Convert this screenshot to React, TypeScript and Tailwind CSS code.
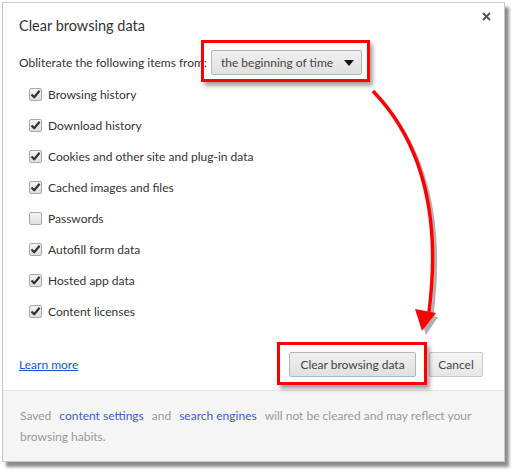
import React from 'react';

const items: { label: string; checked: boolean }[] = [
  { label: 'Browsing history', checked: true },
  { label: 'Download history', checked: true },
  { label: 'Cookies and other site and plug-in data', checked: true },
  { label: 'Cached images and files', checked: true },
  { label: 'Passwords', checked: false },
  { label: 'Autofill form data', checked: true },
  { label: 'Hosted app data', checked: true },
  { label: 'Content licenses', checked: true },
];

const Checkbox: React.FC<{ checked: boolean }> = ({ checked }) => (
  <div className="w-[13px] h-[13px] rounded-[2px] border border-[#a9a9a9] bg-gradient-to-b from-[#f4f4f4] to-[#dedede] flex items-center justify-center">
    {checked && (
      <svg width="11" height="11" viewBox="0 0 11 11">
        <path d="M1.5 5.5 L4.2 8.3 L9.6 1.8" fill="none" stroke="#333" strokeWidth="2.2" strokeLinejoin="round" />
      </svg>
    )}
  </div>
);

export default function App() {
  return (
    <div className="relative w-[514px] h-[472px] bg-white overflow-hidden font-['Lato',sans-serif] text-[#333]">
      {/* dialog */}
      <div className="ml-[2px] mt-[2px] w-[503px] h-[460px] bg-white border border-[#c8c8c8] shadow-[4px_5px_3px_rgba(0,0,0,0.45)] flex flex-col">
        <div className="relative px-[16px] pt-[12px]">
          <div className="text-[14.5px] leading-[22px] text-[#333]">Clear browsing data</div>
          <svg className="absolute right-[13px] top-[9px]" width="9" height="9" viewBox="0 0 9 9">
            <path d="M1 1 L8 8 M8 1 L1 8" stroke="#555" strokeWidth="2" />
          </svg>

          <div className="mt-[13px] flex items-center text-[12px]">
            <span className="whitespace-nowrap">Obliterate the following items from:</span>
            <div className="ml-[4px] w-[151px] h-[25px] rounded-[2px] border border-[#b5b5b5] bg-gradient-to-b from-[#f0f0f0] to-[#e0e0e0] flex items-center justify-between pl-[9px] pr-[7px] text-[#444]">
              <span className="whitespace-nowrap">the beginning of time</span>
              <svg width="10" height="6" viewBox="0 0 10 6">
                <path d="M0 0 H10 L5 6 Z" fill="#111" />
              </svg>
            </div>
          </div>

          <div className="mt-[4px] flex flex-col pl-[10px]">
            {items.map((it) => (
              <div key={it.label} className="h-[31px] flex items-center gap-[6px] text-[12px]">
                <Checkbox checked={it.checked} />
                <span>{it.label}</span>
              </div>
            ))}
          </div>
        </div>

        <div className="mt-auto px-[16px] h-[53px] flex items-start pt-[15px] justify-between">
          <a className="mt-[4px] text-[12px] text-[#1155cc] underline">Learn more</a>
          <div className="flex gap-[13px] mr-[5px]">
            <button className="w-[127px] h-[25px] rounded-[2px] border border-[#b5b5b5] bg-gradient-to-b from-[#f0f0f0] to-[#e0e0e0] text-[12px] text-[#444] whitespace-nowrap">
              Clear browsing data
            </button>
            <button className="w-[54px] h-[25px] rounded-[2px] border border-[#c8c8c8] bg-gradient-to-b from-[#f5f5f5] to-[#e6e6e6] text-[12px] text-[#444]">
              Cancel
            </button>
          </div>
        </div>

        <div className="h-[71px] bg-[#f5f5f5] border-t border-[#e2e2e2] px-[17px] pt-[14px] text-[12px] leading-[21px] text-[#999]">
          <div className="flex whitespace-nowrap">
            <span>Saved</span>
            <span className="ml-[8px] text-[#3b5bd0]">content settings</span>
            <span className="ml-[8px]">and</span>
            <span className="ml-[8px] text-[#3b5bd0]">search engines</span>
            <span className="ml-[8px]">will not be cleared and may reflect your</span>
          </div>
          <div>browsing habits.</div>
        </div>
      </div>

      {/* annotations */}
      <div className="absolute left-[201px] top-[40px] w-[169px] h-[42px] border-[3px] border-[#ff0000] shadow-[3px_4px_4px_rgba(0,0,0,0.35)]" />
      <div className="absolute left-[277px] top-[342px] w-[150px] h-[43px] border-[3px] border-[#ff0000] shadow-[3px_4px_4px_rgba(0,0,0,0.35)]" />
      <svg className="absolute left-0 top-0" width="514" height="472" viewBox="0 0 514 472">
        <g transform="translate(3 4)" opacity="0.3">
          <path d="M373 91 C420 140 442 210 429 312" fill="none" stroke="#000" strokeWidth="3" />
          <path d="M416 310 L435 313 L423 331 Z" fill="#000" />
        </g>
        <path d="M373 91 C420 140 442 210 429 312" fill="none" stroke="#ff0000" strokeWidth="3.5" />
        <path d="M415 309 L436 313 L422 331 Z" fill="#ff0000" />
      </svg>
    </div>
  );
}
